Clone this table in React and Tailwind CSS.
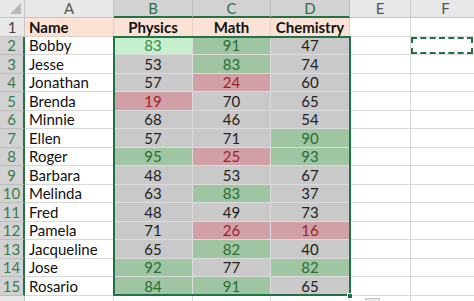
import React from "react";

const rows = [
  ["Bobby", 83, 91, 47],
  ["Jesse", 53, 83, 74],
  ["Jonathan", 57, 24, 60],
  ["Brenda", 19, 70, 65],
  ["Minnie", 68, 46, 54],
  ["Ellen", 57, 71, 90],
  ["Roger", 95, 25, 93],
  ["Barbara", 48, 53, 67],
  ["Melinda", 63, 83, 37],
  ["Fred", 48, 49, 73],
  ["Pamela", 71, 26, 16],
  ["Jacqueline", 65, 82, 40],
  ["Jose", 92, 77, 82],
  ["Rosario", 84, 91, 65],
];

function scoreCls(v, active) {
  if (active) return "bg-[#c6efce] text-[#3a8a45]";
  if (v >= 80) return "bg-[#9fc5a3] text-[#2a6e34]";
  if (v < 30) return "bg-[#d0a0a6] text-[#a0202a]";
  return "bg-[#c9c9c9] text-[#222]";
}

const W = {
  rh: "w-[25px]",
  a: "w-[89px]",
  b: "w-[79px]",
  c: "w-[78px]",
  d: "w-[79px]",
  e: "w-[61px]",
  f: "w-[70px]",
};

export default function App() {
  return (
    <div
      className="relative w-[474px] h-[301px] overflow-hidden bg-white text-[15px]"
      style={{ fontFamily: "Lato, 'Open Sans', sans-serif" }}
    >
      {/* column header */}
      <div className="flex h-[18px] text-[#555]">
        <div className={`${W.rh} shrink-0 relative bg-[#e8e8e8] border-r border-b border-[#c6c6c6]`}>
          <div className="absolute right-[3px] bottom-[3px] w-0 h-0 border-l-[11px] border-l-transparent border-b-[11px] border-b-[#b8b8b8]" />
        </div>
        <div className={`${W.a} shrink-0 flex items-center justify-center bg-[#e8e8e8] border-r border-b border-[#c6c6c6]`}>A</div>
        <div className={`${W.b} shrink-0 flex items-center justify-center bg-[#d2d2d2] text-[#2f6e44] border-r border-[#bdbdbd] border-b-2 border-b-[#217346]`}>B</div>
        <div className={`${W.c} shrink-0 flex items-center justify-center bg-[#d2d2d2] text-[#2f6e44] border-r border-[#bdbdbd] border-b-2 border-b-[#217346]`}>C</div>
        <div className={`${W.d} shrink-0 flex items-center justify-center bg-[#d2d2d2] text-[#2f6e44] border-r border-[#bdbdbd] border-b-2 border-b-[#217346]`}>D</div>
        <div className={`${W.e} shrink-0 flex items-center justify-center bg-[#e8e8e8] border-r border-b border-[#c6c6c6]`}>E</div>
        <div className={`${W.f} shrink-0 flex items-center justify-center bg-[#e8e8e8] border-r border-b border-[#c6c6c6]`}>F</div>
      </div>

      {/* row 1 */}
      <div className="flex h-[18.5px] text-[#111]">
        <div className={`${W.rh} shrink-0 flex items-center justify-center bg-[#e8e8e8] text-[#444] border-r border-b border-[#c6c6c6]`}>1</div>
        <div className={`${W.a} shrink-0 flex items-center pl-[4px] bg-[#fbe2d5] font-bold border-r border-b border-[#e6d0c4]`}>Name</div>
        <div className={`${W.b} shrink-0 flex items-center justify-center bg-[#fbe2d5] font-bold border-r border-b border-[#e6d0c4]`}>Physics</div>
        <div className={`${W.c} shrink-0 flex items-center justify-center bg-[#fbe2d5] font-bold border-r border-b border-[#e6d0c4]`}>Math</div>
        <div className={`${W.d} shrink-0 flex items-center justify-center bg-[#fbe2d5] font-bold border-r border-b border-[#e6d0c4]`}>Chemistry</div>
        <div className={`${W.e} shrink-0 border-r border-b border-[#dadada]`} />
        <div className={`${W.f} shrink-0 border-r border-b border-[#dadada]`} />
      </div>

      {rows.map((r, i) => (
        <div key={i} className="flex h-[18.5px]">
          <div className={`${W.rh} shrink-0 flex items-center justify-center bg-[#d2d2d2] text-[#3b7a4f] border-b border-[#bdbdbd] border-r-2 border-r-[#217346]`}>{i + 2}</div>
          <div className={`${W.a} shrink-0 flex items-center pl-[4px] text-[#111] border-r border-b border-[#d9d9d9]`}>{r[0]}</div>
          <div className={`${W.b} shrink-0 flex items-center justify-center border-r border-b border-[#dcdcdc] ${scoreCls(r[1], i === 0)}`}>{r[1]}</div>
          <div className={`${W.c} shrink-0 flex items-center justify-center border-r border-b border-[#dcdcdc] ${scoreCls(r[2], false)}`}>{r[2]}</div>
          <div className={`${W.d} shrink-0 flex items-center justify-center border-r border-b border-[#dcdcdc] ${scoreCls(r[3], false)}`}>{r[3]}</div>
          <div className={`${W.e} shrink-0 border-r border-b border-[#dadada]`} />
          <div className={`${W.f} shrink-0 border-r border-b border-[#dadada]`} />
        </div>
      ))}

      {/* row 16 partial */}
      <div className="flex h-[18.5px]">
        <div className={`${W.rh} shrink-0 bg-[#e8e8e8] border-r border-b border-[#c6c6c6]`} />
        <div className={`${W.a} shrink-0 border-r border-b border-[#d9d9d9]`} />
        <div className={`${W.b} shrink-0 border-r border-b border-[#d9d9d9]`} />
        <div className={`${W.c} shrink-0 border-r border-b border-[#d9d9d9]`} />
        <div className={`${W.d} shrink-0 border-r border-b border-[#d9d9d9]`} />
        <div className={`${W.e} shrink-0 border-r border-b border-[#d9d9d9]`} />
        <div className={`${W.f} shrink-0 border-r border-b border-[#d9d9d9]`} />
      </div>

      {/* selection overlay B2:D15 */}
      <div className="absolute left-[113px] top-[36px] w-[238px] h-[260px] border-2 border-[#217346] pointer-events-none" />
      {/* fill handle */}
      <div className="absolute left-[347px] top-[293px] w-[6px] h-[6px] bg-[#217346] border border-white" />
      {/* quick analysis button peek */}
      <div className="absolute left-[365px] top-[298px] w-[15px] h-[6px] bg-[#e8e8e8] border border-[#c6c6c6]" />
      {/* copy marching ants at F2 */}
      <div className="absolute left-[411px] top-[37px] w-[62px] h-[17px] border-2 border-dashed border-[#217346]" />
    </div>
  );
}
